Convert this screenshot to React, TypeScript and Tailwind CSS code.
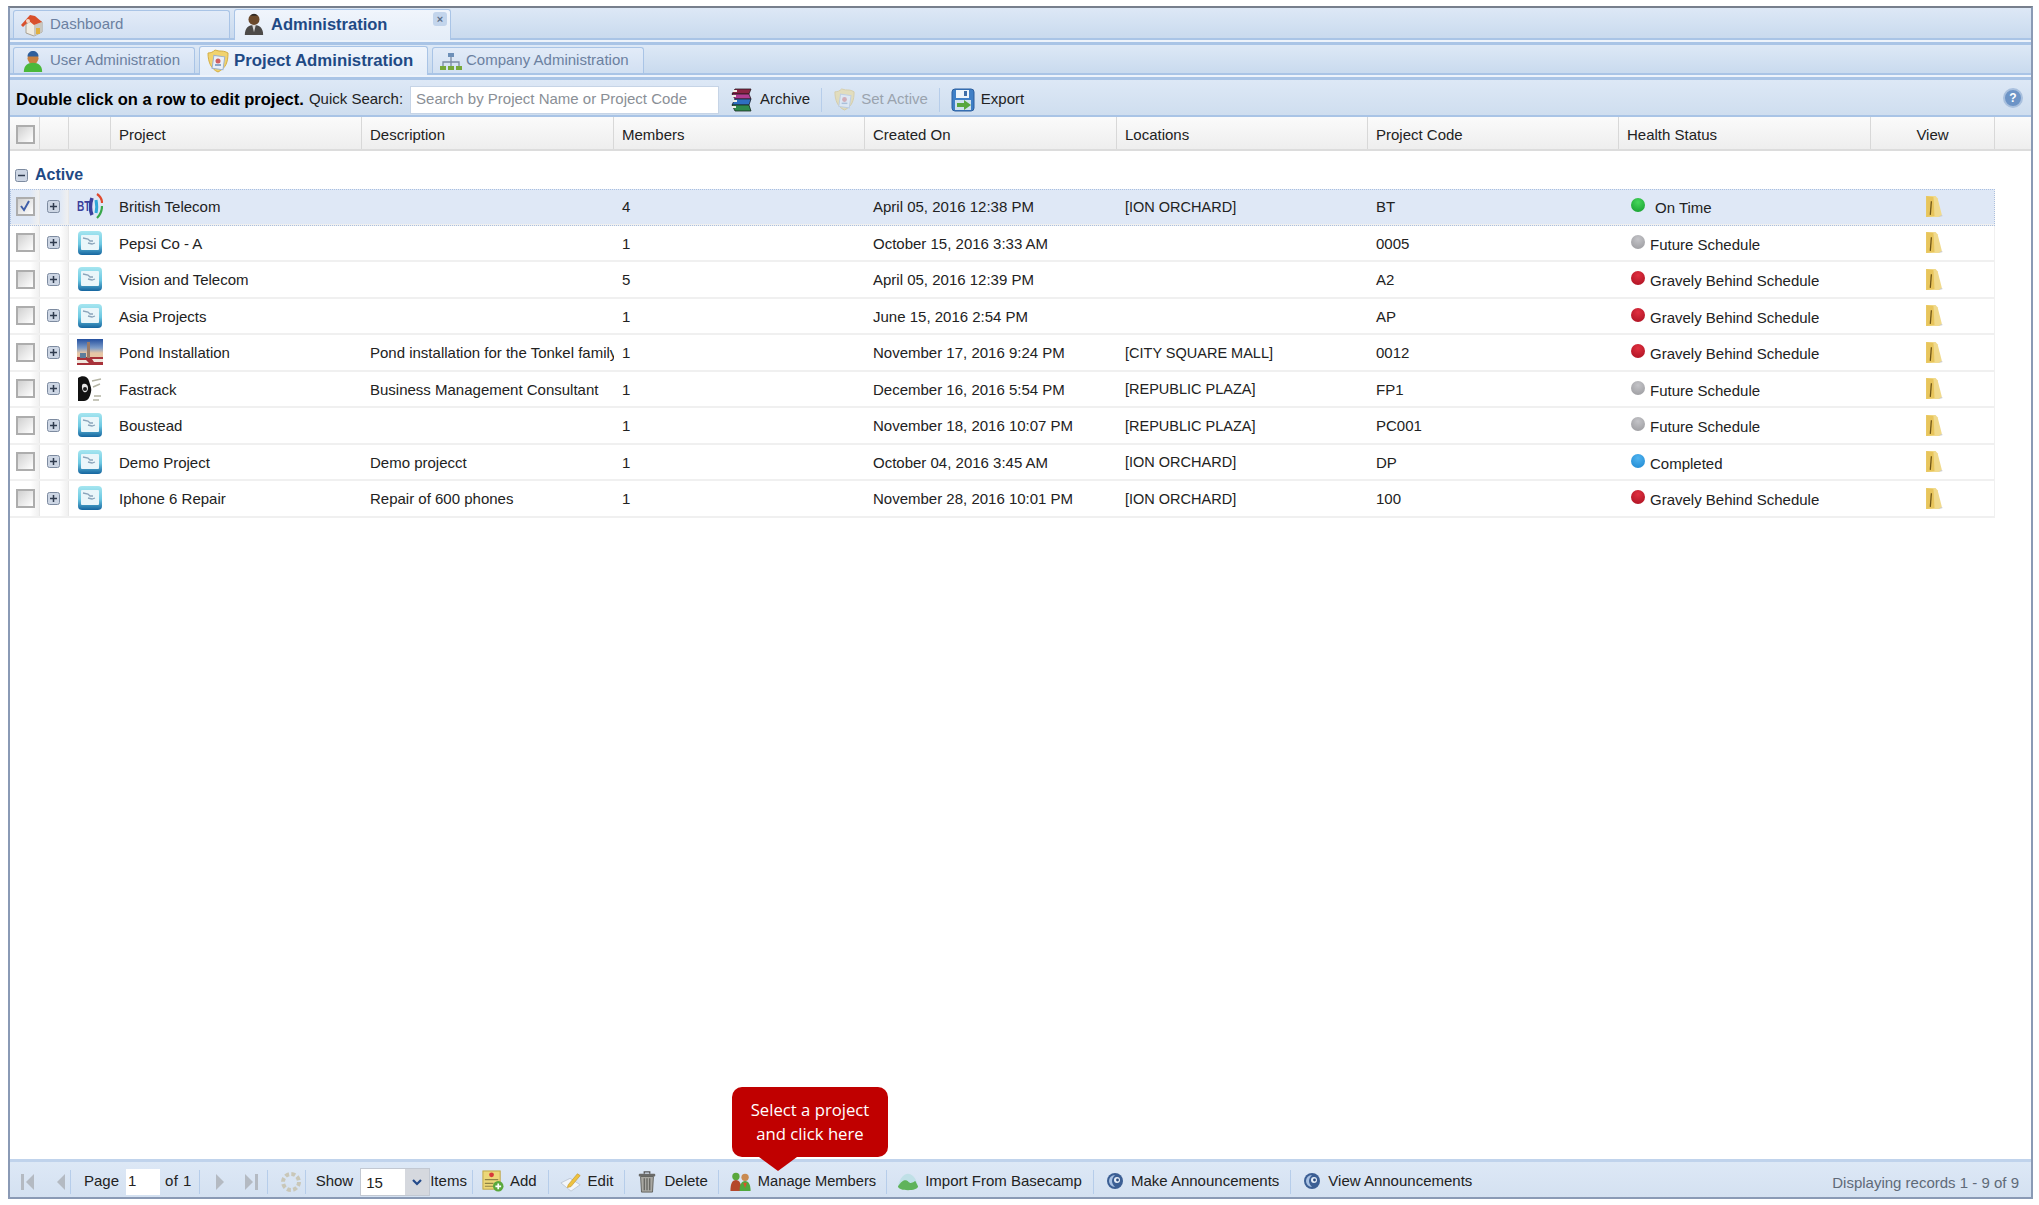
import type { ReactNode } from "react";

const font = "font-['Liberation_Sans',Arial,sans-serif]";

type IconProps = { className?: string };

const HouseIcon = ({ className = "" }: IconProps) => (
	<svg viewBox="0 0 24 24" className={className}>
		<path d="M6 11v9l8 3 8-4V9l-7-3z" fill="#f0ece2" stroke="#a9a294" />
		<path d="M14 23V12l8-3v10z" fill="#c9c7c0" />
		<path d="M1 12 10 2l5 1 7 6-8 3-5-4-6 6z" fill="#d9502c" />
		<circle cx="8" cy="8" r="2" fill="#f6d8c8" />
		<rect x="16" y="15" width="4" height="6" fill="#e0b040" />
	</svg>
);

const AdminIcon = ({ className = "" }: IconProps) => (
	<svg viewBox="0 0 24 24" className={className}>
		<circle cx="12" cy="7" r="6" fill="#6b4a2c" />
		<path d="M8 3c2-3 6-3 8 0z" fill="#2e2a26" />
		<path d="M2 24c0-8 4-11 10-11s10 3 10 11z" fill="#4c4a48" />
		<path d="M10 13h4l-2 8z" fill="#d9d9d9" />
	</svg>
);

const UserIcon = ({ className = "" }: IconProps) => (
	<svg viewBox="0 0 24 24" className={className}>
		<circle cx="12" cy="9" r="6" fill="#c9803f" />
		<path d="M6 7c0-8 12-8 12 0z" fill="#2f5f9c" />
		<path d="M2 24c0-7 4-10 10-10s10 3 10 10z" fill="#4ab83a" />
	</svg>
);

const ShieldIcon = ({ className = "" }: IconProps) => (
	<svg viewBox="0 0 24 24" className={className}>
		<path d="M2 4c3 0 5-1 7-3l4 1c3 0 6 0 9 2 0 9-2 15-10 19C5 20 2 13 2 4z" fill="#f1d36e" stroke="#d4ae45" />
		<rect x="7" y="7" width="11" height="13" transform="rotate(8 12 13)" fill="#eaf0f8" stroke="#9db2cc" />
		<circle cx="12" cy="12" r="2.5" fill="#d06060" />
		<path d="M9 16h6" stroke="#6d8fb8" strokeWidth="1.5" />
	</svg>
);

const OrgIcon = ({ className = "" }: IconProps) => (
	<svg viewBox="0 0 24 24" className={className}>
		<path d="M12 8v5M4 17v-4h16v4M12 13v4" stroke="#7a8ba3" strokeWidth="1.3" fill="none" />
		<rect x="9" y="4" width="6" height="4" fill="#6d8fb8" />
		<rect x="1" y="17" width="6" height="4" fill="#77a93a" />
		<rect x="9" y="17" width="6" height="4" fill="#77a93a" />
		<rect x="17" y="17" width="6" height="4" fill="#77a93a" />
	</svg>
);

const BooksIcon = ({ className = "" }: IconProps) => (
	<svg viewBox="0 0 24 24" className={className}>
		<path d="M6 1h16l-2 5H3z" fill="#8c2446" stroke="#2a1a20" strokeWidth=".8" />
		<path d="M3 6h17l2 5H6z" fill="#b03c92" stroke="#2a1a20" strokeWidth=".8" />
		<path d="M6 11h16l-2 6H3z" fill="#2f6fc0" stroke="#1a2430" strokeWidth=".8" />
		<path d="M3 17h17l2 6H6z" fill="#2f8a4c" stroke="#1a2a20" strokeWidth=".8" />
		<path d="M4 3h4M3 8h4M4 13h4M3 19h4" stroke="#f0efe6" strokeWidth="2" />
	</svg>
);

const FloppyIcon = ({ className = "" }: IconProps) => (
	<svg viewBox="0 0 24 24" className={className}>
		<rect x="1" y="1" width="22" height="22" rx="3" fill="#3f7fc6" stroke="#2c5f9e" />
		<rect x="5" y="2" width="13" height="8" fill="#eef4fa" />
		<rect x="13" y="3" width="3" height="5" fill="#3f6ea8" />
		<rect x="4" y="12" width="16" height="10" fill="#cfe0ee" />
		<path d="M6 15h7v-3l7 5-7 5v-3H6z" fill="#58a63c" />
	</svg>
);

const NoteAddIcon = ({ className = "" }: IconProps) => (
	<svg viewBox="0 0 24 24" className={className}>
		<rect x="2" y="1" width="18" height="19" fill="#ecd778" stroke="#bda544" />
		<circle cx="11" cy="5" r="2.5" fill="#d8383a" />
		<path d="M4 10h14M4 14h9M4 17h9" stroke="#8f8344" strokeWidth="1.2" />
		<circle cx="18" cy="17" r="5.5" fill="#5aa83c" />
		<path d="M15 17h6M18 14v6" stroke="#fff" strokeWidth="1.8" />
	</svg>
);

const EditIcon = ({ className = "" }: IconProps) => (
	<svg viewBox="0 0 24 24" className={className}>
		<path d="M1 13 11 8l11 7-10 7z" fill="#f2f5f9" stroke="#bcc6d3" />
		<path d="M9 15 19 3l3 2-10 12-4 1z" fill="#eec23e" stroke="#c2932a" strokeWidth=".7" />
	</svg>
);

const TrashIcon = ({ className = "" }: IconProps) => (
	<svg viewBox="0 0 24 24" className={className}>
		<path d="M9 3V1h6v2" fill="none" stroke="#555" strokeWidth="1.4" />
		<rect x="3" y="3" width="18" height="3" rx="1" fill="#6a6a68" />
		<path d="M5 6h14l-1 17H6z" fill="#a9a8a2" stroke="#5e5e5a" />
		<path d="M9 8v13M12 8v13M15 8v13" stroke="#5e5e5a" strokeWidth="1.3" />
	</svg>
);

const MembersIcon = ({ className = "" }: IconProps) => (
	<svg viewBox="0 0 24 24" className={className}>
		<circle cx="7" cy="7" r="4" fill="#5aa83c" />
		<path d="M1 23c0-8 2-12 6-12s6 4 6 12z" fill="#b4482c" />
		<circle cx="17" cy="8" r="4" fill="#c98a50" />
		<path d="M11 23c0-7 2-11 6-11s6 4 6 11z" fill="#4fa83c" />
		<path d="M15 14h4l-2 6z" fill="#d8542c" />
	</svg>
);

const BasecampIcon = ({ className = "" }: IconProps) => (
	<svg viewBox="0 0 24 24" className={className}>
		<path d="M1 17C3 7 8 3 12 3s9 4 11 14z" fill="#bfe0e6" />
		<path d="M1 17c3-5 6-7 8-7 3 0 4 3 6 3 3 0 4-2 5-2l3 6c-1 3-5 4-11 4S2 20 1 17z" fill="#5fb35a" />
	</svg>
);

const MegaphoneIcon = ({ className = "" }: IconProps) => (
	<svg viewBox="0 0 20 20" className={className}>
		<circle cx="10" cy="9" r="8" fill="#3c5f94" />
		<path d="M10 3a6 6 0 0 0 0 12c-2-2-3-4-3-6s1-4 3-6z" fill="#a9c2e4" />
		<circle cx="12" cy="8" r="3" fill="#e6eef8" />
		<circle cx="12.5" cy="8" r="1.4" fill="#2c4a7c" />
	</svg>
);

const PageArrow = ({ dir, bar = false }: { dir: "left" | "right"; bar?: boolean }) => (
	<svg viewBox="0 0 18 22" className="h-[22px] w-[18px]">
		{dir === "left" ? (
			<>
				{bar && <rect x="2" y="3" width="3" height="16" fill="#b4bac2" />}
				<path d="M15 3v16L7 11z" fill="#b4bac2" />
			</>
		) : (
			<>
				<path d="M3 3v16l8-8z" fill="#b4bac2" />
				{bar && <rect x="13" y="3" width="3" height="16" fill="#b4bac2" />}
			</>
		)}
	</svg>
);

const CheckBox = ({ checked = false }: { checked?: boolean }) => (
	<div className="ml-[1px] flex h-[19px] w-[19px] items-center justify-center border-2 border-[#adadad] bg-[linear-gradient(135deg,#d0d0d0,#ffffff)]">
		{checked && (
			<svg viewBox="0 0 14 14" className="h-[14px] w-[14px]">
				<path d="M3 7l3 4 5-9" stroke="#3f5ea8" strokeWidth="2" fill="none" />
			</svg>
		)}
	</div>
);

const BoxGlyph = ({ minus = false }: { minus?: boolean }) => (
	<svg viewBox="0 0 13 13" className="h-[13px] w-[13px]">
		<rect x=".5" y=".5" width="12" height="12" rx="2" fill="#cdd6e4" stroke="#7d8ba0" />
		<path d="M3 6.5h7" stroke="#2f3b4e" strokeWidth="1.5" />
		{!minus && <path d="M6.5 3v7" stroke="#2f3b4e" strokeWidth="1.5" />}
	</svg>
);

const ProjectIcon = () => (
	<svg viewBox="0 0 26 26" className="h-[26px] w-[26px]">
		<defs>
			<linearGradient id="projectFrame" x1="0" y1="0" x2="0" y2="1">
				<stop offset="0" stopColor="#a6e6f0" />
				<stop offset=".55" stopColor="#6cc8e2" />
				<stop offset="1" stopColor="#15659f" />
			</linearGradient>
		</defs>
		<rect x="1" y="1" width="24" height="24" rx="4" fill="url(#projectFrame)" />
		<rect x="4" y="5" width="18" height="15" rx="1" fill="#eaf6fa" />
		<path d="M6 8l5 1 2 2h3M11 13l4 1 3-1" stroke="#8aa4ba" strokeWidth="1.3" fill="none" />
	</svg>
);

const BtIcon = () => (
	<div className="flex h-[26px] w-[26px] items-center">
		<span className="w-[12px] origin-left text-[14px] font-bold leading-none text-[#3b3f9b] [transform:scaleX(.72)]">BT</span>
		<svg viewBox="0 0 14 26" className="h-[26px] w-[14px]">
			<path d="M3 5c-2 6-2 12 0 17" stroke="#3b3f9b" strokeWidth="3.5" fill="none" />
			<path d="M8 1c3 2 5 5 5 9" stroke="#e0482c" strokeWidth="2.2" fill="none" />
			<path d="M13 13c0 5-2 9-5 12" stroke="#38a84a" strokeWidth="2.2" fill="none" />
			<path d="M7 7c1 5 1 9 0 13" stroke="#2fa7d8" strokeWidth="3" fill="none" />
		</svg>
	</div>
);

const PondIcon = () => (
	<svg viewBox="0 0 26 26" className="h-[26px] w-[26px]">
		<defs>
			<linearGradient id="pondSky" x1="0" y1="0" x2="0" y2="1">
				<stop offset="0" stopColor="#2450a0" />
				<stop offset=".45" stopColor="#7d9cc8" />
				<stop offset=".7" stopColor="#e6c6a6" />
			</linearGradient>
		</defs>
		<rect width="26" height="20" fill="url(#pondSky)" />
		<rect y="18" width="26" height="8" fill="#a8323a" />
		<rect x="10" y="3" width="3" height="16" fill="#9a7a66" />
		<rect x="3" y="14" width="6" height="5" fill="#5d7d9c" />
		<path d="M0 21h9l3 3H0zM15 20h11v3H17z" fill="#efe6dc" />
	</svg>
);

const FastrackIcon = () => (
	<svg viewBox="0 0 26 26" className="h-[26px] w-[26px]">
		<path d="M1 2c4-3 10-2 11 3 1 4 3 7 2 11-1 5-3 9-7 9H1z" fill="#111" />
		<path d="M6 8c3-1 5 1 5 4s-2 5-4 4-3-7-1-8z" fill="#e6e6e6" />
		<circle cx="8" cy="13" r="2" fill="#222" />
		<path d="M15 5l9-2M16 11l7-3M17 20h7M16 24h6" stroke="#b4b4a4" strokeWidth="1.5" />
	</svg>
);

const FolderIcon = () => (
	<svg viewBox="0 0 18 22" className="h-[23px] w-[19px]">
		<path d="M3 21h10l4-1-3-2H3z" fill="#c8c8c8" />
		<path d="M1 1h9l2 2 4 16-3 2H1z" fill="#f1da8c" />
		<path d="M1 1l7 1 1 18-8 1z" fill="#e8c55c" />
		<path d="M6 6l-1 13" stroke="#6e5416" strokeWidth="1.2" />
	</svg>
);

const Dot = ({ color }: { color: string }) => (
	<span className={`mt-[-6px] h-[14px] w-[14px] rounded-full ${color}`} />
);

const Tab = ({ icon, label, width, height, active, pad = "pl-[8px]", text, children }: { icon: ReactNode; label: string; width: string; height: string; active?: boolean; pad?: string; text: string; children?: ReactNode }) => (
	<div className={`relative flex items-center gap-[6px] rounded-t-[3px] border border-b-0 border-[#a9c4e6] ${pad} ${width} ${height} ${active ? `z-10 mb-[-2px] bg-[linear-gradient(#f0f5fc,#e4edf8)] font-bold text-[#1f4a85] ${text}` : "bg-[linear-gradient(#e2ebf8,#d2e0f2)] text-[#6b80a0]"}`}>
		{icon}
		<span>{label}</span>
		{children}
	</div>
);

const BarLines = () => <div className="h-[5px] border-t-2 border-[#edf3fb] bg-[#a9c4e6]" />;

const Sep = ({ m = "mx-[11px]" }: { m?: string }) => <span className={`h-[24px] w-px bg-[#b6cdea] ${m}`} />;

const Action = ({ icon, label, text = "" }: { icon: ReactNode; label: string; text?: string }) => (
	<span className="flex items-center gap-[6px]">
		{icon}
		<span className={text}>{label}</span>
	</span>
);

type Row = { name: string; icon: ReactNode; description?: string; members: string; created: string; location?: string; code: string; status: string; dot: string };

const green = "bg-[radial-gradient(circle_at_50%_30%,#46d65a,#139a2c)]";
const grey = "bg-[radial-gradient(circle_at_50%_30%,#c4c4c8,#98989c)]";
const red = "bg-[radial-gradient(circle_at_50%_30%,#e03040,#a80f20)]";
const blue = "bg-[radial-gradient(circle_at_50%_30%,#50b4f0,#1c86d0)]";

const rows: Row[] = [
	{ name: "British Telecom", icon: <BtIcon />, members: "4", created: "April 05, 2016 12:38 PM", location: "[ION ORCHARD]", code: "BT", status: "On Time", dot: green },
	{ name: "Pepsi Co - A", icon: <ProjectIcon />, members: "1", created: "October 15, 2016 3:33 AM", code: "0005", status: "Future Schedule", dot: grey },
	{ name: "Vision and Telecom", icon: <ProjectIcon />, members: "5", created: "April 05, 2016 12:39 PM", code: "A2", status: "Gravely Behind Schedule", dot: red },
	{ name: "Asia Projects", icon: <ProjectIcon />, members: "1", created: "June 15, 2016 2:54 PM", code: "AP", status: "Gravely Behind Schedule", dot: red },
	{ name: "Pond Installation", icon: <PondIcon />, description: "Pond installation for the Tonkel family", members: "1", created: "November 17, 2016 9:24 PM", location: "[CITY SQUARE MALL]", code: "0012", status: "Gravely Behind Schedule", dot: red },
	{ name: "Fastrack", icon: <FastrackIcon />, description: "Business Management Consultant", members: "1", created: "December 16, 2016 5:54 PM", location: "[REPUBLIC PLAZA]", code: "FP1", status: "Future Schedule", dot: grey },
	{ name: "Boustead", icon: <ProjectIcon />, members: "1", created: "November 18, 2016 10:07 PM", location: "[REPUBLIC PLAZA]", code: "PC001", status: "Future Schedule", dot: grey },
	{ name: "Demo Project", icon: <ProjectIcon />, description: "Demo projecct", members: "1", created: "October 04, 2016 3:45 AM", location: "[ION ORCHARD]", code: "DP", status: "Completed", dot: blue },
	{ name: "Iphone 6 Repair", icon: <ProjectIcon />, description: "Repair of 600 phones", members: "1", created: "November 28, 2016 10:01 PM", location: "[ION ORCHARD]", code: "100", status: "Gravely Behind Schedule", dot: red },
];

const cols = "grid grid-cols-[30px_29px_42px_251px_252px_251px_252px_251px_251px_252px_124px]";
const headers = ["Project", "Description", "Members", "Created On", "Locations", "Project Code", "Health Status"];

export default function App() {
	return (
		<div className={`h-[1205px] w-[2039px] bg-white pb-[6px] pl-[8px] pr-[6px] pt-[6px] text-[15px] text-[#222] ${font}`}>
			<div className="relative flex h-full flex-col border-2 border-[#8a9ab5] border-t-[#777f8c]">
				<div className="flex h-[32px] items-end gap-[4px] border-b-2 border-[#a9c4e6] bg-[linear-gradient(#dde8f6,#c9daee)] pl-[3px]">
					<Tab width="w-[217px]" height="h-[28px]" text="" label="Dashboard" icon={<HouseIcon className="h-[24px] w-[24px]" />} pad="pl-[6px]" />
					<Tab width="w-[217px]" height="h-[31px]" text="pb-[2px] text-[16.5px]" label="Administration" active icon={<AdminIcon className="h-[22px] w-[22px]" />}>
						<span className="absolute right-[3px] top-[2px] flex h-[14px] w-[14px] items-center justify-center rounded-[3px] bg-[#c3d5ec] text-[11px] font-bold leading-none text-[#5d6f88]">×</span>
					</Tab>
				</div>
				<BarLines />
				<div className="flex h-[30px] items-end gap-[4px] border-b-2 border-[#a9c4e6] bg-[linear-gradient(#dde8f6,#c9daee)] pl-[3px]">
					<Tab width="w-[182px]" height="h-[26px]" text="" label="User Administration" icon={<UserIcon className="h-[22px] w-[22px]" />} />
					<Tab width="w-[229px]" height="h-[29px]" text="text-[16.8px]" label="Project Administration" active pad="pl-[6px]" icon={<ShieldIcon className="mr-[-2px] h-[24px] w-[24px]" />} />
					<Tab width="w-[212px]" height="h-[26px]" text="" label="Company Administration" pad="pl-[6px]" icon={<OrgIcon className="mr-[-3px] h-[24px] w-[24px]" />} />
				</div>
				<BarLines />
				<div className="flex h-[37px] items-center border-b-2 border-[#a9c4e6] bg-[linear-gradient(#dde8f6,#cfdeef)] pl-[6px] pr-[8px] pt-[4px]">
					<span className="text-[16.5px] font-bold text-black">Double click on a row to edit project.</span>
					<span className="ml-[5px]">Quick Search:</span>
					<div className="ml-[7px] flex h-[28px] w-[309px] items-center border border-[#c6d4e6] bg-white pl-[5px] text-[#8a8f96]">Search by Project Name or Project Code</div>
					<BooksIcon className="ml-[10px] h-[24px] w-[24px]" />
					<span className="ml-[7px]">Archive</span>
					<Sep />
					<ShieldIcon className="h-[23px] w-[23px] opacity-40" />
					<span className="ml-[5px] text-[#9aa3ae]">Set Active</span>
					<Sep />
					<FloppyIcon className="h-[24px] w-[24px]" />
					<span className="ml-[6px]">Export</span>
					<span className="ml-auto mt-[-4px] flex h-[20px] w-[20px] items-center justify-center rounded-full border-2 border-[#a9c0de] bg-[#6d94c6] text-[12px] font-bold leading-none text-white">?</span>
				</div>
				<div className={`${cols} h-[34px] border-b-2 border-[#dcdcdc] bg-[linear-gradient(#fbfbfb,#eeeeee)]`}>
					<div className="flex items-center justify-center border-r border-[#d8d8d8] pt-[3px]"><CheckBox /></div>
					<div className="border-r border-[#d8d8d8]" />
					<div className="border-r border-[#d8d8d8]" />
					{headers.map((h) => (
						<div key={h} className="flex items-center border-r border-[#d8d8d8] pl-[8px] pt-[4px]">{h}</div>
					))}
					<div className="flex items-center justify-center border-r border-[#d8d8d8] pt-[4px]">View</div>
				</div>
				<div className="flex flex-1 flex-col">
					<div className="flex h-[38px] items-center gap-[7px] pl-[5px] pt-[10px]">
						<BoxGlyph minus />
						<span className="text-[16px] font-bold text-[#1f4a85]">Active</span>
					</div>
					{rows.map((r, i) => (
						<div key={r.name} className={`${cols} h-[36.5px] w-[1985px] items-center border-b-2 border-r border-[#f0f0f0] ${i === 0 ? "bg-[#dfe8f6] outline-1 -outline-offset-1 outline-dotted outline-[#a9bfe0]" : ""}`}>
							<div className="flex h-full items-center justify-center border-r border-[#e8e8e8] bg-[linear-gradient(90deg,transparent_70%,#f0f0f0)]"><CheckBox checked={i === 0} /></div>
							<div className="flex h-full items-center justify-center border-r border-[#e8e8e8] bg-[linear-gradient(90deg,transparent_70%,#f0f0f0)] pr-[2px]"><BoxGlyph /></div>
							<div className="flex h-full items-center justify-center">{r.icon}</div>
							<div className="pl-[8px] pt-[2px]">{r.name}</div>
							<div className="overflow-hidden whitespace-nowrap pl-[8px] pt-[2px]">{r.description}</div>
							<div className="pl-[8px] pt-[2px]">{r.members}</div>
							<div className="pl-[8px] pt-[2px]">{r.created}</div>
							<div className="pl-[8px] pt-[3px] text-[14.5px]">{r.location}</div>
							<div className="pl-[8px] pt-[2px]">{r.code}</div>
							<div className="flex items-center gap-[5px] pl-[12px] pt-[4px]">
								<Dot color={r.dot} />
								<span className={i === 0 ? "ml-[5px]" : ""}>{r.status}</span>
							</div>
							<div className="flex justify-center pl-[3px]"><FolderIcon /></div>
						</div>
					))}
				</div>
				<div className="flex h-[38px] items-center border-t-[3px] border-[#c0d3ec] bg-[linear-gradient(#dde8f6,#d4e1f1)] pl-[9px] pr-[12px] pt-[4px]">
					<PageArrow dir="left" bar />
					<span className="ml-[13px]"><PageArrow dir="left" /></span>
					<Sep m="ml-[2px] mr-[13px]" />
					<span>Page</span>
					<span className="ml-[7px] flex h-[26px] w-[34px] items-center bg-white pl-[2px]">1</span>
					<span className="ml-[5px] tracking-[0.4px]">of 1</span>
					<Sep m="ml-[7px] mr-[13px]" />
					<PageArrow dir="right" />
					<span className="ml-[11px]"><PageArrow dir="right" bar /></span>
					<Sep m="ml-[7px] mr-[12px]" />
					<svg viewBox="0 0 22 22" className="h-[22px] w-[22px]">
						<circle cx="11" cy="11" r="8" fill="none" stroke="#c9c7b8" strokeWidth="4" strokeDasharray="4 2.3" />
					</svg>
					<Sep m="ml-[3px] mr-[10px]" />
					<span>Show</span>
					<div className="ml-[7px] flex h-[28px] w-[70px] border border-[#c2c8d2] bg-white">
						<span className="flex-1 pl-[5px] leading-[28px]">15</span>
						<span className="flex w-[24px] items-center justify-center bg-[#d5d8de]">
							<svg viewBox="0 0 12 12" className="h-[12px] w-[12px]">
								<path d="M2 4l4 4 4-4" stroke="#234a8a" strokeWidth="2.2" fill="none" />
							</svg>
						</span>
					</div>
					<span>Items</span>
					<Sep m="ml-[5px] mr-[8px]" />
					<Action label="Add" icon={<NoteAddIcon className="h-[23px] w-[23px]" />} />
					<Sep />
					<Action label="Edit" icon={<EditIcon className="h-[22px] w-[22px]" />} />
					<Sep />
					<Action label="Delete" icon={<TrashIcon className="h-[24px] w-[22px]" />} />
					<Sep m="mx-[10px]" />
					<Action label="Manage Members" text="text-[14.7px]" icon={<MembersIcon className="h-[22px] w-[23px]" />} />
					<Sep m="mx-[10px]" />
					<Action label="Import From Basecamp" icon={<BasecampIcon className="h-[22px] w-[22px]" />} />
					<Sep />
					<Action label="Make Announcements" icon={<MegaphoneIcon className="h-[20px] w-[20px]" />} />
					<Sep />
					<Action label="View Announcements" icon={<MegaphoneIcon className="h-[20px] w-[20px]" />} />
					<span className="ml-auto pt-[3px] text-[#5f6a78]">Displaying records 1 - 9 of 9</span>
				</div>
				<div className="absolute left-[722px] top-[1079px] z-20 flex h-[70px] w-[156px] items-center justify-center rounded-[10px] bg-[#c00000] text-center font-['Open_Sans',sans-serif] text-[16.7px] leading-[24px] text-white">
					<span>Select a project<br />and click here</span>
					<span className="absolute left-[27px] top-[70px] h-0 w-0 border-x-[19px] border-t-[14px] border-x-transparent border-t-[#c00000]" />
				</div>
			</div>
		</div>
	);
}
